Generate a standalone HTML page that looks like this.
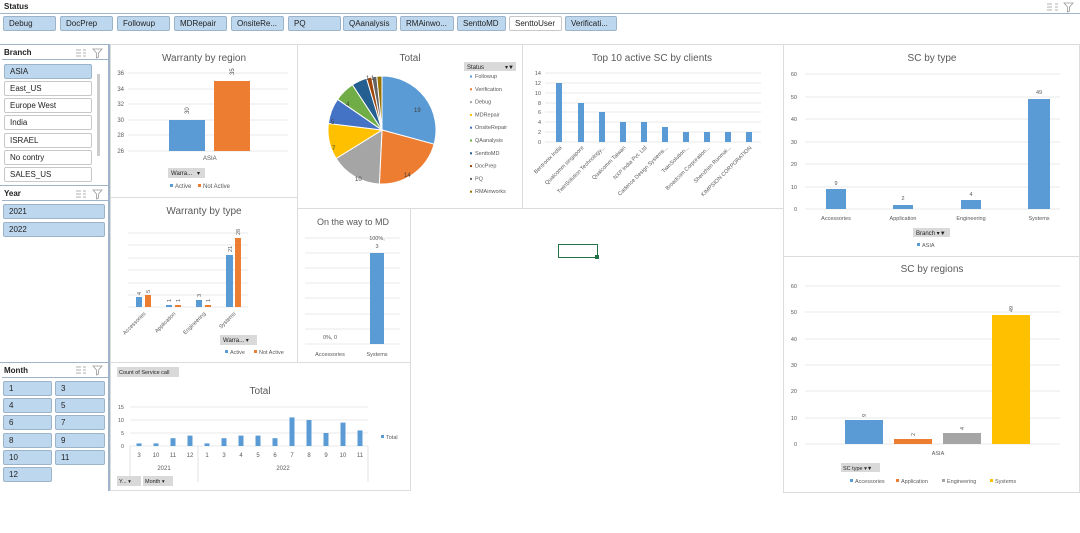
<!DOCTYPE html>
<html><head><meta charset="utf-8"><style>
*{margin:0;padding:0;box-sizing:border-box}
body{width:1080px;height:533px;background:#fff;font-family:"Liberation Sans",sans-serif;position:relative;overflow:hidden;color:#222}
.a{position:absolute}
.btn{position:absolute;height:15px;background:#bdd7ee;border:1px solid #9db3c8;border-radius:2px;font-size:8px;line-height:13px;padding-left:5px;color:#222;white-space:nowrap;overflow:hidden}
.w{background:#fff;border-color:#c8c8c8}
.box{position:absolute;border:1px solid #dcdcdc;background:#fff}
.hdr{position:absolute;font-size:8px;font-weight:bold}
svg{position:absolute;left:0;top:0}
svg text{font-family:"Liberation Sans",sans-serif}
</style></head><body>
<div class="hdr" style="left:4px;top:2px">Status</div>
<div class="a" style="left:0;top:13px;width:1080px;height:1px;background:#9fb4c8"></div>
<div class="btn" style="left:3px;top:16px;width:53px">Debug</div>
<div class="btn" style="left:60px;top:16px;width:53px">DocPrep</div>
<div class="btn" style="left:117px;top:16px;width:53px">Followup</div>
<div class="btn" style="left:174px;top:16px;width:53px">MDRepair</div>
<div class="btn" style="left:231px;top:16px;width:53px">OnsiteRe...</div>
<div class="btn" style="left:288px;top:16px;width:53px">PQ</div>
<div class="btn" style="left:343px;top:16px;width:54px">QAanalysis</div>
<div class="btn" style="left:400px;top:16px;width:54px">RMAinwo...</div>
<div class="btn" style="left:457px;top:16px;width:49px">SenttoMD</div>
<div class="btn w" style="left:509px;top:16px;width:53px">SenttoUser</div>
<div class="btn" style="left:565px;top:16px;width:52px">Verificati...</div>
<div class="a" style="left:0;top:44px;width:1080px;height:1px;background:#9fb4c8"></div>

<!-- chart boxes -->
<div class="box" style="left:110px;top:44px;width:188px;height:154px"></div>
<div class="box" style="left:297px;top:44px;width:226px;height:165px"></div>
<div class="box" style="left:522px;top:44px;width:262px;height:165px"></div>
<div class="box" style="left:783px;top:44px;width:297px;height:213px"></div>
<div class="box" style="left:110px;top:197px;width:188px;height:166px"></div>
<div class="box" style="left:297px;top:208px;width:114px;height:155px"></div>
<div class="box" style="left:110px;top:362px;width:301px;height:129px"></div>
<div class="box" style="left:783px;top:256px;width:297px;height:237px"></div>

<!-- slicers -->
<div class="a" style="left:0;top:44px;width:110px;height:447px;border-right:2px solid #9fb4c8"></div>
<div class="hdr" style="left:4px;top:48px">Branch</div>
<div class="a" style="left:2px;top:59px;width:106px;height:1px;background:#9fb4c8"></div>
<div class="btn" style="left:4px;top:64px;width:88px">ASIA</div>
<div class="btn w" style="left:4px;top:81px;width:88px">East_US</div>
<div class="btn w" style="left:4px;top:98px;width:88px">Europe West</div>
<div class="btn w" style="left:4px;top:115px;width:88px">India</div>
<div class="btn w" style="left:4px;top:133px;width:88px">ISRAEL</div>
<div class="btn w" style="left:4px;top:150px;width:88px">No contry</div>
<div class="btn w" style="left:4px;top:167px;width:88px">SALES_US</div>
<div class="a" style="left:97px;top:74px;width:3px;height:82px;background:#ccc"></div>
<div class="a" style="left:0;top:185px;width:110px;height:1px;background:#9fb4c8"></div>
<div class="hdr" style="left:4px;top:189px">Year</div>
<div class="a" style="left:2px;top:200px;width:106px;height:1px;background:#9fb4c8"></div>
<div class="btn" style="left:3px;top:204px;width:102px">2021</div>
<div class="btn" style="left:3px;top:222px;width:102px">2022</div>
<div class="a" style="left:0;top:362px;width:110px;height:1px;background:#9fb4c8"></div>
<div class="hdr" style="left:4px;top:366px">Month</div>
<div class="a" style="left:2px;top:377px;width:106px;height:1px;background:#9fb4c8"></div>
<div class="btn" style="left:3px;top:381px;width:49px">1</div><div class="btn" style="left:55px;top:381px;width:50px">3</div>
<div class="btn" style="left:3px;top:398px;width:49px">4</div><div class="btn" style="left:55px;top:398px;width:50px">5</div>
<div class="btn" style="left:3px;top:415px;width:49px">6</div><div class="btn" style="left:55px;top:415px;width:50px">7</div>
<div class="btn" style="left:3px;top:433px;width:49px">8</div><div class="btn" style="left:55px;top:433px;width:50px">9</div>
<div class="btn" style="left:3px;top:450px;width:49px">10</div><div class="btn" style="left:55px;top:450px;width:50px">11</div>
<div class="btn" style="left:3px;top:467px;width:49px">12</div>

<div class="a" style="left:558px;top:244px;width:40px;height:14px;border:1.5px solid #217346"></div>
<div class="a" style="left:595px;top:255px;width:4px;height:4px;background:#217346"></div>

<svg width="1080" height="533" viewBox="0 0 1080 533" font-size="6" fill="#595959">
<g stroke="#999" fill="none" stroke-width="0.8">
<path d="M1047 4h5M1047 7h5M1047 10h5M1055 4h3M1055 7h3M1055 10h3"/><path d="M1064 3h9l-3.5 4v4l-2 1v-5z"/>
<path d="M76 50h5M76 53h5M76 56h5M83 50h3M83 53h3M83 56h3"/><path d="M93 49h9l-3.5 4v4l-2 1v-5z"/>
<path d="M76 191h5M76 194h5M76 197h5M83 191h3M83 194h3M83 197h3"/><path d="M93 190h9l-3.5 4v4l-2 1v-5z"/>
<path d="M76 367h5M76 370h5M76 373h5M83 367h3M83 370h3M83 373h3"/><path d="M93 366h9l-3.5 4v4l-2 1v-5z"/>
</g>
<g fill="#222" font-size="8">
</g>
<!-- Warranty by region -->
<text x="204" y="61" font-size="10" text-anchor="middle" fill="#595959">Warranty by region</text>
<g stroke="#e3e3e3" stroke-width="0.8"><path d="M128 73h160M128 89h160M128 104h160M128 120h160M128 135h160M128 151h160"/></g>
<g text-anchor="end"><text x="124" y="75">36</text><text x="124" y="91">34</text><text x="124" y="106">32</text><text x="124" y="122">30</text><text x="124" y="137">28</text><text x="124" y="153">26</text></g>
<rect x="169" y="120" width="36" height="31" fill="#5b9bd5"/><rect x="214" y="81" width="36" height="70" fill="#ed7d31"/>
<text transform="translate(189,114) rotate(-90)">30</text><text transform="translate(234,75) rotate(-90)">35</text>
<text x="203" y="160">ASIA</text>
<rect x="168" y="168" width="37" height="10" fill="#d9d9d9"/><text x="171" y="175" fill="#222">Warra...</text><text x="197" y="175" fill="#222">▾</text>
<rect x="170" y="184" width="3" height="3" fill="#5b9bd5"/><text x="175" y="188">Active</text>
<rect x="198" y="184" width="3" height="3" fill="#ed7d31"/><text x="203" y="188">Not Active</text>

<!-- Pie -->
<text x="410" y="61" font-size="10" text-anchor="middle">Total</text>
<g id="pie" stroke="#fff" stroke-width="1"></g>
<g font-size="6" fill="#404040"><text x="414" y="112">19</text><text x="404" y="177">14</text><text x="355" y="181">10</text><text x="332" y="150">7</text><text x="331" y="124">5</text><text x="346" y="106">4</text><text x="366" y="80">1 1</text></g>
<rect x="464" y="62" width="52" height="9" fill="#d9d9d9"/><text x="467" y="69" fill="#222">Status</text><text x="505" y="69" fill="#222">▾▼</text>
<g id="leg" font-size="5.5"></g>

<!-- Top 10 -->
<text x="652" y="61" font-size="10" text-anchor="middle">Top 10  active SC by clients</text>
<g stroke="#e3e3e3" stroke-width="0.8"><path d="M545 73h216M545 83h216M545 93h216M545 103h216M545 112h216M545 122h216M545 132h216M545 142h216"/></g>
<g text-anchor="end" font-size="5.5"><text x="541" y="75">14</text><text x="541" y="85">12</text><text x="541" y="95">10</text><text x="541" y="105">8</text><text x="541" y="114">6</text><text x="541" y="124">4</text><text x="541" y="134">2</text><text x="541" y="144">0</text></g>
<g fill="#5b9bd5"><rect x="556" y="83" width="6" height="59"/><rect x="578" y="103" width="6" height="39"/><rect x="599" y="112" width="6" height="30"/><rect x="620" y="122" width="6" height="20"/><rect x="641" y="122" width="6" height="20"/><rect x="662" y="127" width="6" height="15"/><rect x="683" y="132" width="6" height="10"/><rect x="704" y="132" width="6" height="10"/><rect x="725" y="132" width="6" height="10"/><rect x="746" y="132" width="6" height="10"/></g>
<g text-anchor="end" font-size="5.5">
<text transform="translate(562,148) rotate(-45)">Bentronix India</text>
<text transform="translate(584,148) rotate(-45)">Qualcomm singapore</text>
<text transform="translate(605,148) rotate(-45)">TwinSolution Technology...</text>
<text transform="translate(626,148) rotate(-45)">Qualcomm Taiwan</text>
<text transform="translate(647,148) rotate(-45)">NXP India Pvt. Ltd</text>
<text transform="translate(668,148) rotate(-45)">Cadence Design Systems...</text>
<text transform="translate(689,148) rotate(-45)">TwinSolution...</text>
<text transform="translate(710,148) rotate(-45)">Broadcom Corporation...</text>
<text transform="translate(731,148) rotate(-45)">Shenzhen Runmai...</text>
<text transform="translate(752,148) rotate(-45)">KIMPSION CORPORATION</text>
</g>

<!-- SC by type -->
<text x="932" y="61" font-size="10" text-anchor="middle">SC by type</text>
<g stroke="#e3e3e3" stroke-width="0.8"><path d="M805 74h255M805 97h255M805 119h255M805 142h255M805 164h255M805 187h255M805 209h255"/></g>
<g text-anchor="end" font-size="5.5"><text x="797" y="76">60</text><text x="797" y="99">50</text><text x="797" y="121">40</text><text x="797" y="144">30</text><text x="797" y="166">20</text><text x="797" y="189">10</text><text x="797" y="211">0</text></g>
<g fill="#5b9bd5"><rect x="826" y="189" width="20" height="20"/><rect x="893" y="205" width="20" height="4"/><rect x="961" y="200" width="20" height="9"/><rect x="1028" y="99" width="22" height="110"/></g>
<g text-anchor="middle" font-size="5.5"><text x="836" y="185">9</text><text x="903" y="200">2</text><text x="971" y="196">4</text><text x="1039" y="94">49</text>
<text x="836" y="220">Accessories</text><text x="903" y="220">Application</text><text x="971" y="220">Engineering</text><text x="1039" y="220">Systems</text></g>
<rect x="913" y="228" width="37" height="9" fill="#d9d9d9"/><text x="916" y="235" fill="#222">Branch ▾▼</text>
<rect x="917" y="243" width="3" height="3" fill="#5b9bd5"/><text x="922" y="247" font-size="5.5">ASIA</text>

<!-- Warranty by type -->
<text x="204" y="214" font-size="10" text-anchor="middle">Warranty by type</text>
<g stroke="#e3e3e3" stroke-width="0.8"><path d="M128 233h120M128 245h120M128 258h120M128 270h120M128 283h120M128 295h120M128 307h120"/></g>
<g fill="#5b9bd5"><rect x="136" y="297" width="6" height="10"/><rect x="166" y="305" width="6" height="2"/><rect x="196" y="300" width="6" height="7"/><rect x="226" y="255" width="7" height="52"/></g>
<g fill="#ed7d31"><rect x="145" y="295" width="6" height="12"/><rect x="175" y="305" width="6" height="2"/><rect x="205" y="305" width="6" height="2"/><rect x="235" y="238" width="6" height="69"/></g>
<g font-size="5.5"><text transform="translate(141,295) rotate(-90)">4</text><text transform="translate(150,293) rotate(-90)">5</text><text transform="translate(171,302) rotate(-90)">1</text><text transform="translate(180,302) rotate(-90)">1</text><text transform="translate(201,297) rotate(-90)">3</text><text transform="translate(210,302) rotate(-90)">1</text><text transform="translate(232,252) rotate(-90)">21</text><text transform="translate(240,235) rotate(-90)">28</text></g>
<g text-anchor="end" font-size="5.5"><text transform="translate(146,314) rotate(-45)">Accessories</text><text transform="translate(176,314) rotate(-45)">Application</text><text transform="translate(206,314) rotate(-45)">Engineering</text><text transform="translate(236,314) rotate(-45)">Systems</text></g>
<rect x="220" y="335" width="37" height="10" fill="#d9d9d9"/><text x="223" y="342" fill="#222">Warra...  ▾</text>
<rect x="225" y="350" width="3" height="3" fill="#5b9bd5"/><text x="230" y="354" font-size="5.5">Active</text>
<rect x="254" y="350" width="3" height="3" fill="#ed7d31"/><text x="259" y="354" font-size="5.5">Not Active</text>

<!-- On the way -->
<text x="353" y="225" font-size="9" text-anchor="middle">On the way to MD</text>
<g stroke="#e3e3e3" stroke-width="0.8"><path d="M305 238h95M305 253h95M305 268h95M305 283h95M305 298h95M305 314h95M305 329h95M305 344h95"/></g>
<rect x="370" y="253" width="14" height="91" fill="#5b9bd5"/>
<g text-anchor="middle" font-size="5.5"><text x="377" y="240">100%,</text><text x="377" y="248">3</text><text x="330" y="339">0%, 0</text><text x="330" y="356">Accessories</text><text x="377" y="356">Systems</text></g>

<!-- bottom total -->
<rect x="117" y="367" width="62" height="10" fill="#d9d9d9"/><text x="119" y="374" fill="#222" font-size="5.5">Count of Service call</text>
<text x="260" y="394" font-size="10" text-anchor="middle">Total</text>
<g stroke="#e3e3e3" stroke-width="0.8"><path d="M130 407h238M130 420h238M130 433h238M130 446h238"/></g>
<g stroke="#d9d9d9" stroke-width="0.8"><path d="M130 446v36M198 446v36M368 446v36"/></g>
<g text-anchor="end" font-size="5.5"><text x="124" y="409">15</text><text x="124" y="422">10</text><text x="124" y="435">5</text><text x="124" y="448">0</text></g>
<g id="bt" fill="#5b9bd5"></g>
<g id="btl" text-anchor="middle" font-size="6"></g>
<text x="164" y="470" font-size="6" text-anchor="middle">2021</text><text x="283" y="470" font-size="6" text-anchor="middle">2022</text>
<rect x="381" y="435" width="3" height="3" fill="#5b9bd5"/><text x="386" y="439" font-size="5.5">Total</text>
<rect x="117" y="476" width="24" height="10" fill="#d9d9d9"/><text x="119" y="483" fill="#222" font-size="5.5">Y...  ▾</text>
<rect x="143" y="476" width="30" height="10" fill="#d9d9d9"/><text x="145" y="483" fill="#222" font-size="5.5">Month ▾</text>

<!-- SC by regions -->
<text x="932" y="272" font-size="10" text-anchor="middle">SC by regions</text>
<g stroke="#e3e3e3" stroke-width="0.8"><path d="M805 286h255M805 312h255M805 339h255M805 365h255M805 391h255M805 418h255M805 444h255"/></g>
<g text-anchor="end" font-size="5.5"><text x="797" y="288">60</text><text x="797" y="314">50</text><text x="797" y="341">40</text><text x="797" y="367">30</text><text x="797" y="393">20</text><text x="797" y="420">10</text><text x="797" y="446">0</text></g>
<rect x="845" y="420" width="38" height="24" fill="#5b9bd5"/><rect x="894" y="439" width="38" height="5" fill="#ed7d31"/><rect x="943" y="433" width="38" height="11" fill="#a5a5a5"/><rect x="992" y="315" width="38" height="129" fill="#ffc000"/>
<g font-size="5.5"><text transform="translate(866,417) rotate(-90)">9</text><text transform="translate(915,436) rotate(-90)">2</text><text transform="translate(964,430) rotate(-90)">4</text><text transform="translate(1013,312) rotate(-90)">49</text></g>
<text x="938" y="455" font-size="5.5" text-anchor="middle">ASIA</text>
<rect x="841" y="463" width="39" height="9" fill="#d9d9d9"/><text x="843" y="470" fill="#222" font-size="5.5">SC type ▾▼</text>
<g font-size="5.5"><rect x="850" y="479" width="3" height="3" fill="#5b9bd5"/><text x="855" y="483">Accessories</text>
<rect x="896" y="479" width="3" height="3" fill="#ed7d31"/><text x="901" y="483">Application</text>
<rect x="942" y="479" width="3" height="3" fill="#a5a5a5"/><text x="947" y="483">Engineering</text>
<rect x="990" y="479" width="3" height="3" fill="#ffc000"/><text x="995" y="483">Systems</text></g>
</svg>
<script>
var NS="http://www.w3.org/2000/svg";
var vals=[19,14,10,7,5,4,3,1,1,1],cols=["#5b9bd5","#ed7d31","#a5a5a5","#ffc000","#4472c4","#70ad47","#255e91","#9e480e","#636363","#997300"],
names=["Followup","Verification","Debug","MDRepair","OnsiteRepair","QAanalysis","SenttoMD","DocPrep","PQ","RMAinworks"];
var cx=382,cy=130,r=54,a=-Math.PI/2,tot=65,g=document.getElementById("pie"),L=document.getElementById("leg");
vals.forEach(function(v,i){var b=a+v/tot*2*Math.PI;var p=document.createElementNS(NS,"path");
p.setAttribute("d","M"+cx+" "+cy+"L"+(cx+r*Math.cos(a))+" "+(cy+r*Math.sin(a))+"A"+r+" "+r+" 0 "+(b-a>Math.PI?1:0)+" 1 "+(cx+r*Math.cos(b))+" "+(cy+r*Math.sin(b))+"Z");
p.setAttribute("fill",cols[i]);g.appendChild(p);a=b;
var y=78+i*12.8;var c=document.createElementNS(NS,"rect");c.setAttribute("x",470);c.setAttribute("y",y-2.5);c.setAttribute("width",2);c.setAttribute("height",2);c.setAttribute("fill",cols[i]);L.appendChild(c);
var t=document.createElementNS(NS,"text");t.setAttribute("x",475);t.setAttribute("y",y);t.textContent=names[i];L.appendChild(t);});
var bv=[1,1,3,4,1,3,4,4,3,11,10,5,9,6],bl=["3","10","11","12","1","3","4","5","6","7","8","9","10","11"],B=document.getElementById("bt"),BL=document.getElementById("btl");
bv.forEach(function(v,i){var x=139+i*17;var h=v*2.6;var rr=document.createElementNS(NS,"rect");rr.setAttribute("x",x-2.5);rr.setAttribute("y",446-h);rr.setAttribute("width",5);rr.setAttribute("height",h);B.appendChild(rr);
var t=document.createElementNS(NS,"text");t.setAttribute("x",x);t.setAttribute("y",457);t.textContent=bl[i];BL.appendChild(t);});
</script>
</body></html>
